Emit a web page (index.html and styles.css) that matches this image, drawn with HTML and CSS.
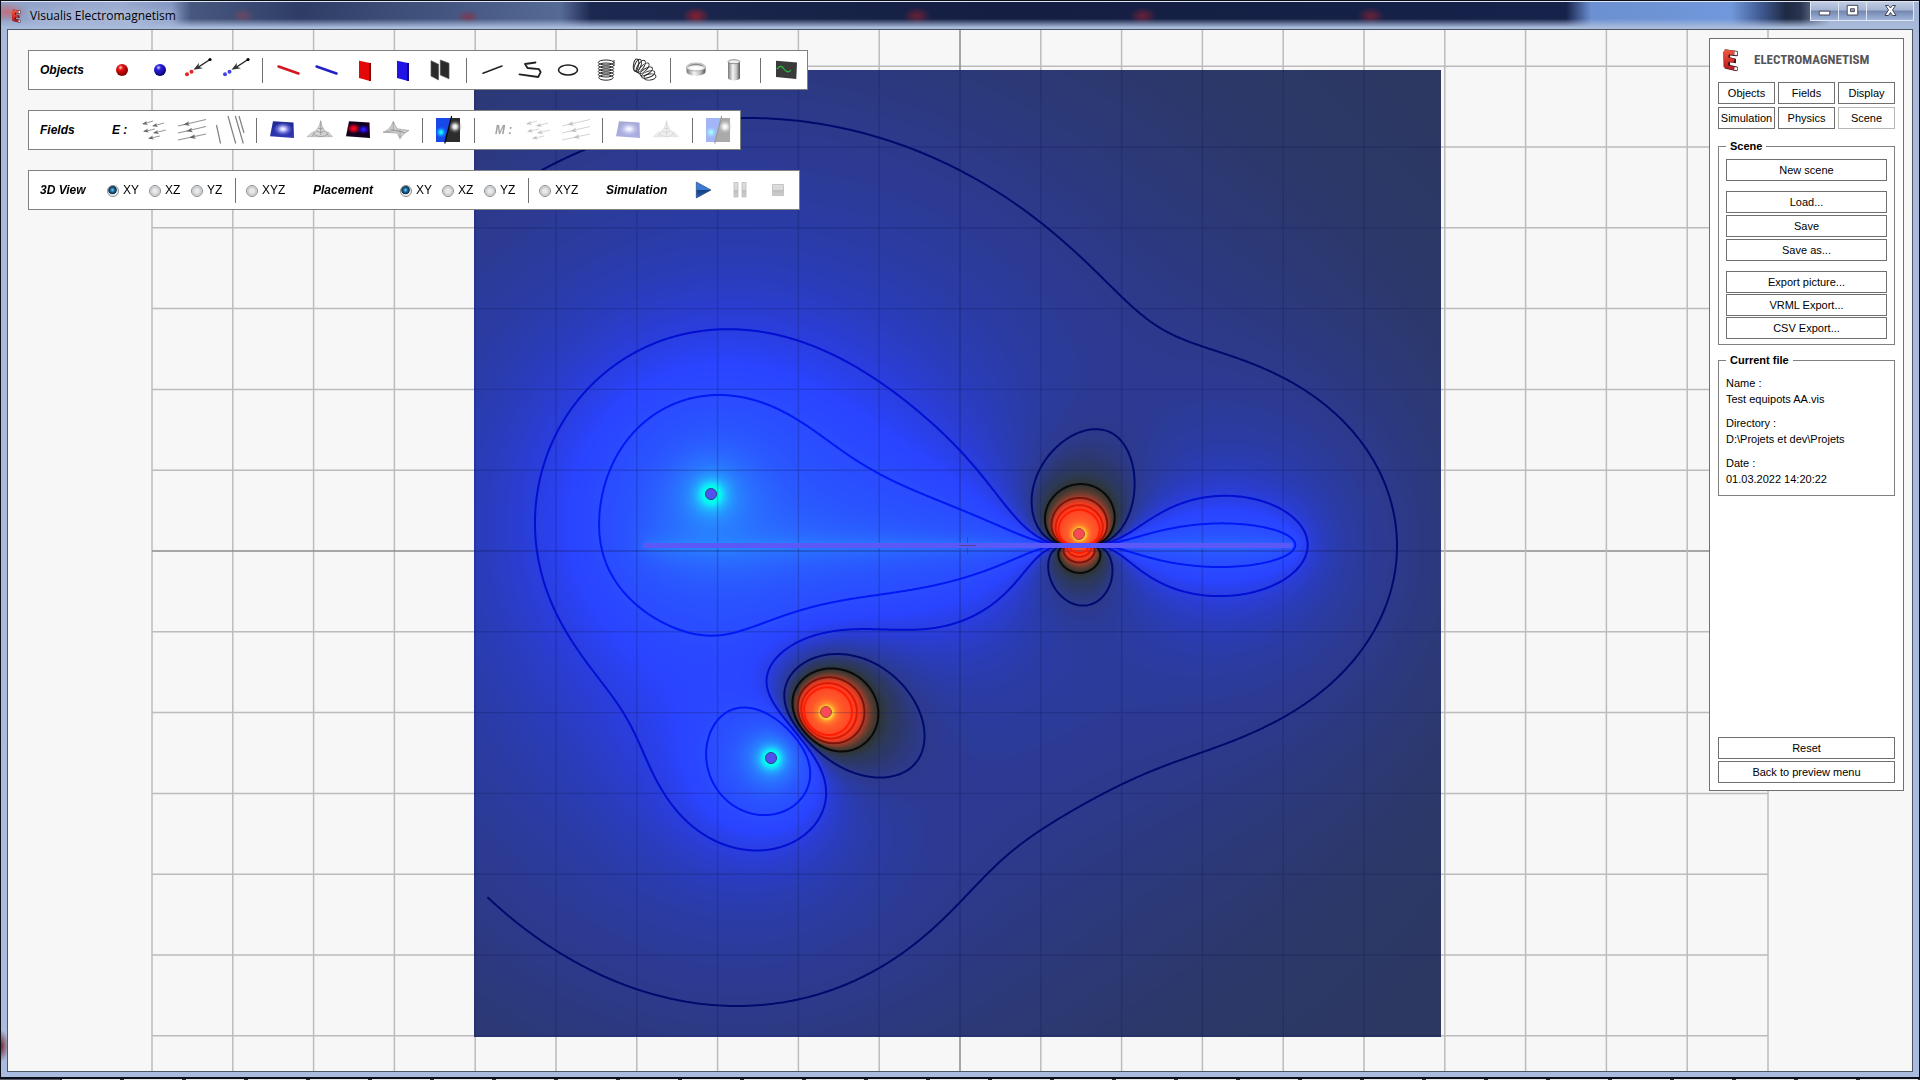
FILE: index.html
```html
<!DOCTYPE html>
<html lang="en">
<head>
<meta charset="utf-8">
<title>Visualis Electromagnetism</title>
<link rel="stylesheet" href="styles.css">
</head>
<body>
<svg class="defs" width="0" height="0" aria-hidden="true">
  <defs>
    <radialGradient id="redBall" cx=".38" cy=".3" r=".7"><stop offset="0" stop-color="#ffd0d0"/><stop offset=".3" stop-color="#e81010"/><stop offset="1" stop-color="#7a0000"/></radialGradient>
    <radialGradient id="blueBall" cx=".38" cy=".3" r=".7"><stop offset="0" stop-color="#d0d0ff"/><stop offset=".3" stop-color="#2a20dd"/><stop offset="1" stop-color="#0c0070"/></radialGradient>
    <linearGradient id="metal"><stop offset="0" stop-color="#777"/><stop offset=".4" stop-color="#f4f4f4"/><stop offset=".7" stop-color="#c4c4c4"/><stop offset="1" stop-color="#555"/></linearGradient>
    <linearGradient id="magnetRed" x1="0" y1="0" x2="0" y2="1"><stop offset="0" stop-color="#f0583c"/><stop offset="1" stop-color="#b81420"/></linearGradient>
    <radialGradient id="whiteGlow"><stop offset="0" stop-color="#fff"/><stop offset=".25" stop-color="#c8ccff"/><stop offset="1" stop-color="#5a5ae0" stop-opacity="0"/></radialGradient>
    <radialGradient id="redGlow"><stop offset="0" stop-color="#ff0a1e"/><stop offset=".35" stop-color="#e0001e"/><stop offset="1" stop-color="#a0001e" stop-opacity="0"/></radialGradient>
    <radialGradient id="blueGlow"><stop offset="0" stop-color="#3a1eff"/><stop offset=".35" stop-color="#2a0ee0"/><stop offset="1" stop-color="#1a00a0" stop-opacity="0"/></radialGradient>
    <radialGradient id="cyanGlow"><stop offset="0" stop-color="#2affff"/><stop offset=".3" stop-color="#14d0ff"/><stop offset="1" stop-color="#1464ff" stop-opacity="0"/></radialGradient>
    <radialGradient id="greyGlow"><stop offset="0" stop-color="#fff"/><stop offset=".3" stop-color="#ddd"/><stop offset="1" stop-color="#444" stop-opacity="0"/></radialGradient>
    <linearGradient id="plane" x1="0" y1="0" x2="0" y2="1"><stop offset="0" stop-color="#1c2890"/><stop offset="1" stop-color="#3038b4"/></linearGradient>
    <linearGradient id="playFill" x1="0" y1="0" x2="0" y2="1"><stop offset="0" stop-color="#3b7bd4"/><stop offset=".5" stop-color="#3b7bd4"/><stop offset=".5" stop-color="#123f80"/><stop offset="1" stop-color="#2a63b4"/></linearGradient>
    <linearGradient id="offFill" x1="0" y1="0" x2="0" y2="1"><stop offset="0" stop-color="#dedede"/><stop offset=".5" stop-color="#d8d8d8"/><stop offset=".5" stop-color="#bcbcbc"/><stop offset="1" stop-color="#d0d0d0"/></linearGradient>
    <symbol id="arrows" viewBox="0 0 38 38">
      <g stroke="#999" stroke-width="1" fill="#666">
        <path d="M8 13 18 10M18 15 29 12M9 20.500 20 18M19 22 31 19M14 27.500 25 25"/>
        <path stroke="none" d="M7 13l5-3-1 2 2 2zM17 15l5-3-1 2 2 2zM8 20.500l5-3-1 2 2 2zM18 22l5-3-1 2 2 2zM13 27.500l5-3-1 2 2 2z"/>
      </g>
    </symbol>
    <symbol id="fieldLines" viewBox="0 0 38 38">
      <path stroke="#909090" d="M5 15 33 8.500M5 22 33 15.500M5 29 33 23"/>
      <path fill="#666" d="M10 13.800l6-3.500-1 2.500 2 2zM13 20.200l6-3.500-1 2.500 2 2zM16 26.700l6-3.500-1 2.500 2 2z"/>
    </symbol>
    <symbol id="potential" viewBox="0 0 38 38">
      <path fill="url(#plane)" d="M10 10.300 30.500 11.500 31 27 7 25.300z"/><ellipse cx="20" cy="18" rx="10" ry="7" fill="url(#whiteGlow)"/>
    </symbol>
    <symbol id="peak" viewBox="0 0 38 38">
      <path fill="#d4d4d4" stroke="#aaa" stroke-width=".6" d="M6 25.700 11 21.500C17 20 18 15 19.700 9.700 21 15 22 20 28 21.500L31.500 25.700z"/>
      <path fill="none" stroke="#8c8c8c" stroke-width=".7" d="M12 23q8 5 15 0M15 20q5 3 9 0M17 17q3 2 5 0M19.700 10v14M14 21l-3 4.500M25 21l3 4.500"/>
    </symbol>
    <symbol id="combo" viewBox="0 0 38 38">
      <path fill="#1848e8" d="M7 7h15.500L16 31H7z"/><path fill="#2c2c2c" d="M22.500 7H31v24H16z"/>
      <circle cx="12" cy="21.300" r="6" fill="url(#cyanGlow)"/><circle cx="26" cy="15.700" r="7" fill="url(#greyGlow)"/>
      <path stroke="#000" stroke-width="1.200" d="M22.700 5 15.700 32.500"/>
    </symbol>
    <symbol id="magnet" viewBox="0 0 20 26">
      <path fill="#3a1414" d="M3 1 17.500 3v5.500L16 8.700 9 8v2l6.500 1.500v5L9 15.500v3l8.500 2v4l-1.500 1L3 22.500z"/>
      <path fill="url(#magnetRed)" d="M4 1.300 14 2.800 13 7.500 7.500 7 7 10.300l7 1.400-1 4.300-6-.800-.5 3.800 7.500 1.500-.5 4.200L1.700 21 1 4z"/>
      <path fill="#f4f4f4" d="M14 3.200l3 .5-.5 4-3-.3zM14 20.800l3 .6-.5 3.100-3-.5z"/>
    </symbol>
  </defs>
</svg>

<div class="window">
  <header class="titlebar">
    <svg class="titlebar-icon" viewBox="0 0 20 26"><use href="#magnet"/></svg>
    <h1 class="titlebar-text">Visualis Electromagnetism</h1>
    <div class="window-buttons">
      <button class="win-btn" aria-label="Minimize"><svg viewBox="0 0 28 18"><path fill="#fff" stroke="#445" d="M8.500 9.500h11v4h-11z"/></svg></button>
      <button class="win-btn" aria-label="Maximize"><svg viewBox="0 0 28 18"><path fill="#fff" stroke="#445" fill-rule="evenodd" d="M8.500 3.500h11v10h-11zM12 7h4v3h-4z"/></svg></button>
      <button class="win-btn win-btn-close" aria-label="Close"><svg viewBox="0 0 46 18"><path fill="#fff" stroke="#445" d="M18.500 3.500h3l2 2.500 2-2.500h3L25.500 8l3.500 5.500h-3.500l-2-3-2 3H18L21.500 8z"/></svg></button>
    </div>
  </header>

  <main class="scene">
    <canvas class="field" id="field"></canvas>

    <div class="toolbars">
      <section class="toolbar toolbar-objects" aria-label="Objects">
        <h2 class="toolbar-label">Objects</h2>
        <button class="tool" aria-label="Positive charge"><svg viewBox="0 0 38 38"><circle cx="19" cy="19" r="6" fill="url(#redBall)"/></svg></button>
        <button class="tool" aria-label="Negative charge"><svg viewBox="0 0 38 38"><circle cx="19" cy="19" r="6" fill="url(#blueBall)"/></svg></button>
        <button class="tool" aria-label="Moving positive charge"><svg viewBox="0 0 38 38"><path stroke="#222" stroke-width="1.400" d="M31 8.500 18 17"/><path fill="#333" d="M14.500 18.700l5.500-7-.500 4 4.500 1.500z"/><circle cx="31" cy="8.500" r="1.600"/><circle cx="8" cy="23.200" r="2" fill="#e62222"/><circle cx="12.500" cy="20.700" r="2" fill="#e62222"/></svg></button>
        <button class="tool" aria-label="Moving negative charge"><svg viewBox="0 0 38 38"><path stroke="#222" stroke-width="1.400" d="M31 8.500 18 17"/><path fill="#333" d="M14.500 18.700l5.500-7-.500 4 4.500 1.500z"/><circle cx="31" cy="8.500" r="1.600"/><circle cx="8" cy="23.200" r="2" fill="#4444e6"/><circle cx="12.500" cy="20.700" r="2" fill="#4444e6"/></svg></button>
        <span class="sep"></span>
        <button class="tool" aria-label="Positive rod"><svg viewBox="0 0 38 38"><path stroke="#d4141e" stroke-width="2.400" stroke-linecap="round" d="M9.500 15.500 29.500 22.500"/></svg></button>
        <button class="tool" aria-label="Negative rod"><svg viewBox="0 0 38 38"><path stroke="#2420c8" stroke-width="2.400" stroke-linecap="round" d="M9.500 15.500 29.500 22.500"/></svg></button>
        <button class="tool" aria-label="Positive plate"><svg viewBox="0 0 38 38"><path fill="#e40808" d="M14 9.700 25 12v18l-11-3z"/><path fill="#8c0000" d="M24 12l2 0v18h-2z"/></svg></button>
        <button class="tool" aria-label="Negative plate"><svg viewBox="0 0 38 38"><path fill="#2014e4" d="M14 9.700 25 12v18l-11-3z"/><path fill="#10008c" d="M24 12l2 0v18h-2z"/></svg></button>
        <button class="tool" aria-label="Capacitor"><svg viewBox="0 0 38 38"><path fill="#2b2b2b" stroke="#555" stroke-width=".7" d="M10 9.700 17.500 13.300V29L10 25zM19.300 9 28 12.300v15.500L19.300 24z"/></svg></button>
        <span class="sep"></span>
        <button class="tool" aria-label="Straight wire"><svg viewBox="0 0 38 38"><path stroke="#222" stroke-width="1.500" stroke-linecap="round" d="M10 22.300 29 15"/></svg></button>
        <button class="tool" aria-label="Free wire"><svg viewBox="0 0 38 38"><path fill="none" stroke="#222" stroke-width="1.800" stroke-linecap="round" stroke-linejoin="round" d="M24.500 11.500 14 13l2.500 4L28 18.200l1.700 3-2.500 4.800L8.500 23.300"/></svg></button>
        <button class="tool" aria-label="Current loop"><svg viewBox="0 0 38 38"><ellipse cx="19" cy="19" rx="9.500" ry="5" fill="none" stroke="#222" stroke-width="1.600"/></svg></button>
        <button class="tool" aria-label="Solenoid"><svg viewBox="0 0 38 38"><g fill="none" stroke="#2a2a2a" stroke-width="1"><ellipse cx="19" cy="11.500" rx="7.700" ry="2.500"/><ellipse cx="19" cy="14.500" rx="7.700" ry="2.500"/><ellipse cx="19" cy="17.500" rx="7.700" ry="2.500"/><ellipse cx="19" cy="20.500" rx="7.700" ry="2.500"/><ellipse cx="19" cy="23.500" rx="7.700" ry="2.500"/><ellipse cx="19" cy="26.500" rx="7.200" ry="2.700"/><path d="M27 9v6"/></g></svg></button>
        <button class="tool" aria-label="Toroid"><svg viewBox="0 0 38 38"><g fill="none" stroke="#2a2a2a" stroke-width="1"><ellipse cx="11" cy="14" rx="2.500" ry="6" transform="rotate(10 11 14)"/><ellipse cx="13" cy="14.500" rx="3" ry="6.500" transform="rotate(22 13 14)"/><ellipse cx="16" cy="15.500" rx="3" ry="7" transform="rotate(34 16 15)"/><ellipse cx="19" cy="17.500" rx="3" ry="7" transform="rotate(46 19 17)"/><ellipse cx="21.500" cy="20" rx="3" ry="7" transform="rotate(58 21 20)"/><ellipse cx="23.500" cy="23" rx="3" ry="7" transform="rotate(70 23 23)"/><ellipse cx="25" cy="26" rx="3" ry="6" transform="rotate(82 25 26)"/></g></svg></button>
        <span class="sep"></span>
        <button class="tool" aria-label="Ring magnet"><svg viewBox="0 0 38 38"><path fill="url(#metal)" d="M9.500 16v5c1.500 5 17.500 5 19 0v-5z"/><ellipse cx="19" cy="16" rx="9.500" ry="4" fill="#e4e4e4" stroke="#aaa" stroke-width=".8"/><path fill="#8c8c8c" d="M10.500 16c2-4.500 15-4.500 17 0-4-2.500-13-2.500-17 0z"/><path fill="#fff" d="M11.500 17c4-2.500 11-2.500 15 0-4 2.700-11 2.700-15 0z"/></svg></button>
        <button class="tool" aria-label="Bar magnet"><svg viewBox="0 0 38 38"><path fill="url(#metal)" d="M13 11v16.500c2 2.500 10 2.500 12 0V11z"/><ellipse cx="19" cy="10.700" rx="6" ry="2" fill="#eee" stroke="#777" stroke-width=".8"/></svg></button>
        <span class="sep"></span>
        <button class="tool" aria-label="Oscilloscope"><svg viewBox="0 0 38 38"><path fill="#3a3a3a" d="M9 9.700 30 11.500 29.300 28 9 26z"/><path fill="none" stroke="#24c040" stroke-width="1.300" d="M10 18c3-4 5-3 7 0s5 4 7 1"/></svg></button>
      </section>

      <section class="toolbar toolbar-fields" aria-label="Fields">
        <h2 class="toolbar-label">Fields</h2>
        <h3 class="toolbar-sublabel">E :</h3>
        <button class="tool" aria-label="E vectors"><svg><use href="#arrows"/></svg></button>
        <button class="tool" aria-label="E field lines"><svg><use href="#fieldLines"/></svg></button>
        <button class="tool" aria-label="Equipotentials"><svg viewBox="0 0 38 38"><path stroke="#808080" stroke-width="1.200" d="M5.500 14 9.500 32.500M17 5 24.700 32.500M24.300 5 32.300 32.500M28 5 33 22"/></svg></button>
        <span class="sep"></span>
        <button class="tool" aria-label="E intensity"><svg><use href="#potential"/></svg></button>
        <button class="tool" aria-label="E surface"><svg><use href="#peak"/></svg></button>
        <button class="tool" aria-label="Potential map"><svg viewBox="0 0 38 38"><path fill="#12001e" d="M10 10.300 30.500 11.500 31 27 7 25.300z"/><ellipse cx="14.700" cy="17.500" rx="7" ry="5.500" fill="url(#redGlow)"/><ellipse cx="24.500" cy="18.500" rx="6" ry="5" fill="url(#blueGlow)"/></svg></button>
        <button class="tool" aria-label="Potential surface"><svg viewBox="0 0 38 38"><path fill="#d0d0d0" stroke="#999" stroke-width=".7" d="M6 21.300C12 19 14 16 16.300 10.300 18 14 19 17 21 18L32 19.500 28 22C26 23 25 25 23 27.700 21.500 25 21 23 20 22z"/><path fill="none" stroke="#888" stroke-width=".6" d="M9 21l10-2 9 3M13 18l6 2 7 1M16.300 11v9M23 19v8"/></svg></button>
        <span class="sep"></span>
        <button class="tool" aria-label="E display mode"><svg><use href="#combo"/></svg></button>
        <span class="sep"></span>
        <h3 class="toolbar-sublabel toolbar-sublabel-off">M :</h3>
        <button class="tool" disabled aria-label="M vectors"><svg><use href="#arrows"/></svg></button>
        <button class="tool" disabled aria-label="M field lines"><svg><use href="#fieldLines"/></svg></button>
        <span class="sep"></span>
        <button class="tool" disabled aria-label="M intensity"><svg><use href="#potential"/></svg></button>
        <button class="tool" disabled aria-label="M surface"><svg><use href="#peak"/></svg></button>
        <span class="sep"></span>
        <button class="tool" disabled aria-label="M display mode"><svg><use href="#combo"/></svg></button>
      </section>

      <section class="toolbar toolbar-view" aria-label="View">
        <h2 class="toolbar-label toolbar-label-view">3D View</h2>
        <label class="radio"><input type="radio" name="view" checked>XY</label>
        <label class="radio"><input type="radio" name="view">XZ</label>
        <label class="radio"><input type="radio" name="view">YZ</label>
        <span class="sep sep-left"></span>
        <label class="radio radio-wide"><input type="radio" name="view">XYZ</label>
        <h2 class="group-label">Placement</h2>
        <label class="radio"><input type="radio" name="placement" checked>XY</label>
        <label class="radio"><input type="radio" name="placement">XZ</label>
        <label class="radio"><input type="radio" name="placement">YZ</label>
        <span class="sep sep-left"></span>
        <label class="radio radio-wide"><input type="radio" name="placement">XYZ</label>
        <h2 class="group-label group-label-sim">Simulation</h2>
        <button class="tool" aria-label="Play"><svg viewBox="0 0 38 38"><path fill="url(#playFill)" stroke="#123a78" stroke-width=".6" d="M13.300 11 28 19 13.300 27z"/></svg></button>
        <button class="tool" disabled aria-label="Pause"><svg viewBox="0 0 38 38"><path fill="url(#offFill)" stroke="#bbb" stroke-width=".8" d="M13 11.500h4v14.500h-4zM21 11.500h4v14.500h-4z"/></svg></button>
        <button class="tool" disabled aria-label="Stop"><svg viewBox="0 0 38 38"><path fill="url(#offFill)" stroke="#bbb" stroke-width=".8" d="M13.500 13.500h11v11h-11z"/></svg></button>
      </section>
    </div>

    <aside class="panel">
      <div class="brand">
        <svg class="brand-icon" viewBox="0 0 20 26"><use href="#magnet"/></svg>
        <span class="brand-text">ELECTROMAGNETISM</span>
      </div>
      <nav class="tabs">
        <button class="btn">Objects</button>
        <button class="btn">Fields</button>
        <button class="btn">Display</button>
        <button class="btn">Simulation</button>
        <button class="btn">Physics</button>
        <button class="btn btn-current">Scene</button>
      </nav>
      <fieldset class="group">
        <legend>Scene</legend>
        <div class="stack">
          <button class="btn">New scene</button>
        </div>
        <div class="stack">
          <button class="btn">Load...</button>
          <button class="btn">Save</button>
          <button class="btn">Save as...</button>
        </div>
        <div class="stack stack-tight">
          <button class="btn">Export picture...</button>
          <button class="btn">VRML Export...</button>
          <button class="btn">CSV Export...</button>
        </div>
      </fieldset>
      <fieldset class="group group-file">
        <legend>Current file</legend>
        <dl class="facts">
          <div><dt>Name :</dt><dd>Test equipots AA.vis</dd></div>
          <div><dt>Directory :</dt><dd>D:\Projets et dev\Projets</dd></div>
          <div><dt>Date :</dt><dd>01.03.2022 14:20:22</dd></div>
        </dl>
      </fieldset>
      <div class="stack panel-footer">
        <button class="btn">Reset</button>
        <button class="btn">Back to preview menu</button>
      </div>
    </aside>
  </main>
</div>
<div class="desktop-edge"></div>
<script src="field.js"></script>
</body>
</html>
```
FILE: styles.css
```css
* { box-sizing: border-box; }

body {
  margin: 0;
  height: 100vh;
  display: flex;
  flex-direction: column;
  background: #11131c;
  color: #000;
  font: 11px/16px "Liberation Sans", Arial, sans-serif;
  overflow: hidden;
}

h1, h2, h3, dl, dd { margin: 0; }

button {
  font: inherit;
  color: inherit;
  padding: 0;
  border: 0;
  background: none;
}

svg { display: block; }

.defs { position: absolute; }

.window {
  flex: 1;
  min-height: 0;
  display: flex;
  flex-direction: column;
  border: 1px solid #0c0e18;
  padding: 0 6px 5px;
  background:
    radial-gradient(ellipse 8px 16px at 0 1045px, #7a2430, transparent),
    linear-gradient(#a9b9da, #a9bcdf);
}

.titlebar {
  flex: 0 0 28px;
  margin: 0 -6px;
  padding-left: 10px;
  display: flex;
  align-items: center;
  gap: 8px;
  border-top: 1px solid #dfe6f4;
  background:
    linear-gradient(transparent 62%, #a9bbdb 94%),
    radial-gradient(ellipse 14px 9px at 695px 14px, #8a2030, transparent),
    radial-gradient(ellipse 14px 9px at 916px 14px, #6a2038, transparent),
    radial-gradient(ellipse 14px 9px at 1142px 14px, #6a2038, transparent),
    radial-gradient(ellipse 14px 9px at 1370px 14px, #6a2038, transparent),
    radial-gradient(ellipse 12px 7px at 467px 15px, #7a3a54, transparent),
    radial-gradient(ellipse 12px 8px at 242px 14px, #6a4864, transparent),
    radial-gradient(ellipse 20px 10px at 6px 10px, #c07080, transparent),
    linear-gradient(90deg, #8fa0c6, #9aaad0 120px, #8497c2 170px, #47587f 190px, #2f3d66 300px, #43557f 440px, #566a96 560px, #1c2850 590px, #141e42 1000px, #16224a 1565px, #6c90d2 1590px, #7098da 1730px, #405a92 1760px, #1e2a44 1785px, #2a3650 1800px, #a4b4d4 1830px);
}

.titlebar-icon { width: 11px; height: 14px; }

.titlebar-text {
  flex: 1;
  font: 12px/20px "Open Sans", "Noto Sans", sans-serif;
  text-shadow: 0 0 8px #c8d4ec, 0 0 8px #c8d4ec;
}

.window-buttons {
  align-self: flex-start;
  display: flex;
  margin-right: 5px;
  border: 1px solid #dfe6f4;
  border-top: 0;
}

.win-btn {
  width: 28px;
  height: 18px;
  border-right: 1px solid #dfe6f4;
  background: linear-gradient(#c0cce2, #a4b4d2 45%, #7486ae 50%, #a0b4dc);
}

.win-btn-close { width: 46px; border-right: 0; }

.scene {
  flex: 1;
  min-height: 0;
  position: relative;
  display: flex;
  justify-content: space-between;
  align-items: flex-start;
  border: 1px solid #4c5866;
  background: #f7f7f7;
}

.field {
  position: absolute;
  inset: 0;
  width: 100%;
  height: 100%;
}

.toolbars {
  position: relative;
  display: flex;
  flex-direction: column;
  align-items: flex-start;
  gap: 20px;
  padding: 20px;
}

.toolbar {
  display: flex;
  align-items: center;
  height: 40px;
  padding-left: 11px;
  border: 1px solid #808080;
  background: #fff;
}

.toolbar-objects { padding-right: 2px; }
.toolbar-fields { padding-right: 3px; }
.toolbar-view { padding-right: 2px; }

.toolbar-label, .toolbar-sublabel, .group-label {
  font: italic bold 12px/16px "Liberation Sans", Arial, sans-serif;
}

.toolbar-label { width: 63px; }
.toolbar-label-view { width: 67px; }
.toolbar-fields .toolbar-label { width: 72px; }
.toolbar-sublabel { width: 23px; }
.toolbar-sublabel-off { width: 38px; padding-left: 14px; color: #a0a0a0; }
.group-label { width: 87px; }
.group-label-sim { width: 77px; }

.tool { width: 38px; height: 38px; }
.tool svg { width: 38px; height: 38px; }
.toolbar-fields .tool:disabled { opacity: .4; }

.sep {
  width: 14px;
  height: 25px;
  background: linear-gradient(#707070, #707070) 7px 0 / 1px 100% no-repeat;
}

.sep-left { width: 13px; background-position-x: 2px; }

.radio {
  display: flex;
  align-items: center;
  gap: 4px;
  width: 42px;
  font-size: 12px;
}

.radio-wide { width: 67px; }

.radio input {
  appearance: none;
  flex: none;
  width: 12px;
  height: 12px;
  margin: 2px 0 0;
  border: 1px solid #8a8c8e;
  border-radius: 50%;
  background: radial-gradient(circle, #e8e8e8 30%, #c4c8cc 60%, #fff 75%);
}

.radio input:checked {
  background: radial-gradient(circle at 45% 40%, #7fd4f4 0, #1a6a9c 25%, #0c2c48 48%, #e8e8e8 56%, #fff);
}

.panel {
  position: relative;
  display: flex;
  flex-direction: column;
  width: 195px;
  min-height: 753px;
  margin: 8px 8px 8px 0;
  padding: 8px;
  border: 1px solid #707070;
  background: #fff;
}

.brand {
  display: flex;
  align-items: center;
  gap: 14px;
  height: 26px;
  padding-left: 4px;
}

.brand-icon { width: 18px; height: 24px; }

.brand-text {
  color: #55565a;
  font: bold 13px/16px "Liberation Sans Narrow", "Roboto Condensed", Roboto, sans-serif;
}

.tabs {
  display: grid;
  grid-template-columns: repeat(3, 1fr);
  gap: 3px;
  margin-top: 9px;
}

.btn {
  height: 22px;
  border: 1px solid #707070;
  background: #fff;
  line-height: 20px;
}

.btn-current { border-color: #b8b8b8; }

.group {
  min-width: 0;
  margin: 8px 0 0;
  padding: 4px 7px 5px;
  border: 1px solid #808080;
}

.group legend {
  padding: 0 4px;
  font-weight: bold;
  line-height: 18px;
}

.stack {
  display: flex;
  flex-direction: column;
  gap: 2px;
}

.stack + .stack { margin-top: 10px; }
.stack-tight { gap: 1px; }

.group-file { margin-top: 6px; padding: 6px 7px 8px; }

.facts {
  display: flex;
  flex-direction: column;
  gap: 8px;
}

.panel-footer {
  margin-top: auto;
  margin-bottom: -1px;
}

.desktop-edge {
  flex: 0 0 2px;
  border-top: 1px solid #0c0e18;
  background: linear-gradient(90deg, #5c6070 60px, transparent 60px), repeating-linear-gradient(90deg, #e8e8ea 0 58px, #2a2c38 58px 62px);
}
```
FILE: field.js
```javascript
// Potential map of four point charges and one charged rod, seen from above.
// Coordinates are in pixels from the middle of the scene.
const CELL = 80.8;
const CHARGES = [
  { x: -249, y: -57, q: -179 },
  { x: -189, y: 207, q: -178 },
  { x: -134, y: 161, q: 177 },
  { x: 119, y: -17, q: 174 }
];
const ROD = { x1: -317, x2: 332, y: -6, density: -0.667 };
const BOX = { x: -486, y: -481, size: 967 };

const COLOURS = [
  [-24, 0, 255, 235], [-18, 20, 220, 250], [-13, 34, 170, 255], [-9, 40, 130, 255], [-6, 42, 104, 255],
  [-4, 42, 84, 255], [-3, 42, 76, 255], [-2.4, 42, 68, 255], [-2, 42, 62, 225], [-1.5, 42, 60, 180],
  [-1, 44, 58, 140], [-0.7, 44, 56, 105], [-0.4, 45, 57, 85], [0, 46, 52, 48], [0.4, 92, 60, 48],
  [1, 178, 62, 42], [1.6, 240, 60, 32], [2.2, 255, 60, 32], [4, 255, 76, 40], [8, 255, 94, 40],
  [14, 255, 130, 44], [20, 255, 185, 50], [27, 255, 225, 60]
];

const LEVELS = [
  [-3, '#0018f4'], [-2, '#000fd0'], [-1, '#000a6c'], [0, '#0a0a0c'],
  [1, '#7c140a'], [2, '#d81c08'], [3, '#ff1e04']
];

function potential(x, y) {
  let v = 0;
  for (const c of CHARGES) v += c.q / Math.max(1, Math.hypot(x - c.x, y - c.y));
  const d = Math.max(1, Math.abs(y - ROD.y));
  return v + ROD.density * (Math.asinh((ROD.x2 - x) / d) - Math.asinh((ROD.x1 - x) / d));
}

function colour(v) {
  if (v <= COLOURS[0][0]) return COLOURS[0].slice(1);
  for (let i = 1; i < COLOURS.length; i++) {
    const a = COLOURS[i - 1], b = COLOURS[i];
    if (v <= b[0]) {
      const t = (v - a[0]) / (b[0] - a[0]);
      return [1, 2, 3].map(k => a[k] + (b[k] - a[k]) * t);
    }
  }
  return COLOURS[COLOURS.length - 1].slice(1);
}

function renderMap() {
  const n = BOX.size, values = new Float32Array(n * n);
  const map = document.createElement('canvas');
  map.width = map.height = n;
  const ctx = map.getContext('2d');
  const image = ctx.createImageData(n, n);
  for (let j = 0, p = 0; j < n; j++) {
    for (let i = 0; i < n; i++, p++) {
      const v = values[p] = potential(BOX.x + i, BOX.y + j);
      const c = colour(v);
      image.data[p * 4] = c[0];
      image.data[p * 4 + 1] = c[1];
      image.data[p * 4 + 2] = c[2];
      image.data[p * 4 + 3] = 255;
    }
  }
  ctx.putImageData(image, 0, 0);

  ctx.strokeStyle = 'rgba(16, 24, 90, 0.35)';
  ctx.lineWidth = 1.4;
  for (let k = -6; k <= 6; k++) {
    ctx.globalAlpha = k === 0 ? 1 : 0.7;
    ctx.beginPath();
    ctx.moveTo(k * CELL - BOX.x, 0);
    ctx.lineTo(k * CELL - BOX.x, n);
    ctx.moveTo(0, k * CELL - BOX.y);
    ctx.lineTo(n, k * CELL - BOX.y);
    ctx.stroke();
  }
  ctx.globalAlpha = 1;

  ctx.lineWidth = 2;
  ctx.lineCap = 'round';
  for (const [level, stroke] of LEVELS) {
    ctx.strokeStyle = stroke;
    ctx.beginPath();
    contour(ctx, values, n, level, 14, 2);
    ctx.stroke();
  }
  return map;
}

// Marching squares over the sampled values.
function contour(ctx, values, n, level, inset, step) {
  const at = (i, j) => values[j * n + i] - level;
  for (let j = inset; j < n - inset; j += step) {
    for (let i = inset; i < n - inset; i += step) {
      const c = [[i, j], [i + step, j], [i + step, j + step], [i, j + step]];
      const hits = [];
      for (let e = 0; e < 4; e++) {
        const a = c[e], b = c[(e + 1) % 4];
        const va = at(a[0], a[1]), vb = at(b[0], b[1]);
        if ((va < 0) !== (vb < 0)) {
          const t = va / (va - vb);
          hits.push([a[0] + (b[0] - a[0]) * t, a[1] + (b[1] - a[1]) * t]);
        }
      }
      for (let h = 0; h + 1 < hits.length; h += 2) {
        ctx.moveTo(hits[h][0], hits[h][1]);
        ctx.lineTo(hits[h + 1][0], hits[h + 1][1]);
      }
    }
  }
}

const map = renderMap();

function draw() {
  const canvas = document.getElementById('field');
  const w = canvas.width = canvas.clientWidth;
  const h = canvas.height = canvas.clientHeight;
  const ctx = canvas.getContext('2d');
  const cx = Math.round(w / 2), cy = Math.round(h / 2);
  ctx.translate(cx, cy);

  ctx.lineWidth = 1.5;
  for (let k = -10; k <= 10; k++) {
    ctx.strokeStyle = k === 0 ? '#8c8c8c' : '#bcbcbc';
    ctx.beginPath();
    ctx.moveTo(k * CELL, -cy);
    ctx.lineTo(k * CELL, h - cy);
    if (Math.abs(k) <= 6) {
      ctx.moveTo(-10 * CELL, k * CELL);
      ctx.lineTo(10 * CELL, k * CELL);
    }
    ctx.stroke();
  }

  ctx.drawImage(map, BOX.x, BOX.y);

  ctx.fillStyle = '#5c58f8';
  ctx.fillRect(ROD.x1, ROD.y - 2, ROD.x2 - ROD.x1, 5);

  for (const c of CHARGES) {
    ctx.fillStyle = c.q < 0 ? '#5450f0' : '#fa4a58';
    ctx.strokeStyle = c.q < 0 ? '#2c3c90' : '#b04428';
    ctx.lineWidth = 1;
    ctx.beginPath();
    ctx.arc(c.x, c.y, 5.5, 0, Math.PI * 2);
    ctx.fill();
    ctx.stroke();
  }

  ctx.fillStyle = 'rgba(70, 60, 110, 0.7)';
  ctx.fillRect(7, -14, 1, 6);
  ctx.fillRect(7, -3, 1, 6);
  ctx.fillRect(-1, -6, 17, 1);
}

draw();
window.addEventListener('resize', draw);
```
